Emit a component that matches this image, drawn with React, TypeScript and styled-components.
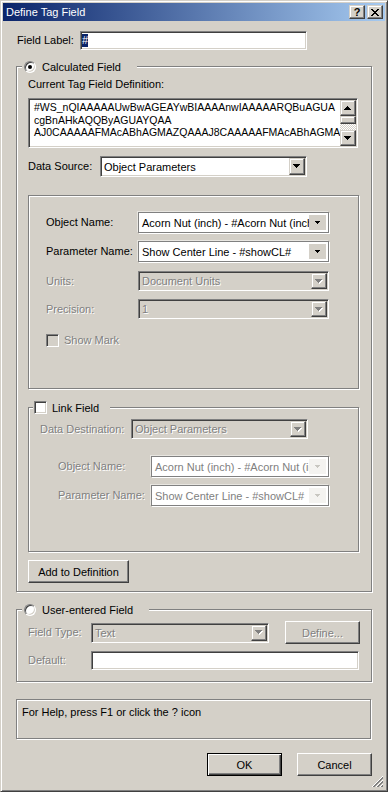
import styled, { createGlobalStyle, css } from "styled-components";

const FACE = "#d4d0c8";
const SHADOW = "#808080";
const DARK = "#404040";

const GlobalStyle = createGlobalStyle`
  html, body {
    margin: 0;
    padding: 0;
    background: ${FACE};
  }
  body {
    font-family: "Liberation Sans", Arial, sans-serif;
    font-size: 11px;
    color: #000;
  }
  * {
    box-sizing: border-box;
  }
`;

// win2k bevels
const raised = css`
  border: 1px solid;
  border-color: #fff ${DARK} ${DARK} #fff;
  box-shadow: inset -1px -1px 0 ${SHADOW}, inset 1px 1px 0 ${FACE};
`;

const raisedSmall = css`
  border: 1px solid;
  border-color: ${FACE} ${DARK} ${DARK} ${FACE};
  box-shadow: inset -1px -1px 0 ${SHADOW}, inset 1px 1px 0 #fff;
`;

const sunken = css`
  border: 1px solid;
  border-color: ${SHADOW} #fff #fff ${SHADOW};
  box-shadow: inset 1px 1px 0 ${DARK}, inset -1px -1px 0 ${FACE};
`;

const etched = css`
  border: 1px solid ${SHADOW};
  box-shadow: inset 1px 1px 0 #fff, 1px 1px 0 #fff;
`;

const greyed = css`
  color: ${SHADOW};
  text-shadow: 1px 1px 0 #fff;
`;

const Window = styled.div`
  position: relative;
  width: 388px;
  height: 792px;
  padding: 2px;
  background: ${FACE};
  border: 1px solid;
  border-color: ${FACE} ${DARK} ${DARK} ${FACE};
  box-shadow: inset 1px 1px 0 #fff, inset -1px -1px 0 ${SHADOW};
  display: flex;
  flex-direction: column;
  overflow: hidden;
`;

const TitleBar = styled.div`
  height: 18px;
  flex-shrink: 0;
  display: flex;
  align-items: center;
  padding: 0 2px 0 3px;
  background: linear-gradient(to right, #0a246a, #a6caf0);
  color: #fff;
`;

const CaptionButtons = styled.div`
  margin-left: auto;
  display: flex;
  gap: 2px;
`;

const CaptionButton = styled.div`
  ${raisedSmall}
  width: 16px;
  height: 14px;
  background: ${FACE};
  color: #000;
  font-weight: bold;
  font-size: 11px;
  display: flex;
  align-items: center;
  justify-content: center;
`;

const Body = styled.div`
  display: flex;
  flex-direction: column;
  align-items: flex-start;
  padding: 0 13px;
`;

const Row = styled.div<{ $mt?: number; $ml?: number; $h?: number }>`
  display: flex;
  align-items: center;
  flex-shrink: 0;
  margin-top: ${(p) => p.$mt ?? 0}px;
  margin-left: ${(p) => p.$ml ?? 0}px;
  height: ${(p) => p.$h ?? 21}px;
`;

const Label = styled.span<{ $w?: number; $disabled?: boolean; $ml?: number }>`
  width: ${(p) => (p.$w ? `${p.$w}px` : "auto")};
  margin-left: ${(p) => p.$ml ?? 0}px;
  flex-shrink: 0;
  white-space: nowrap;
  line-height: 13px;
  ${(p) => p.$disabled && greyed}
`;

const Caption = styled.div<{ $mt: number }>`
  margin-top: ${(p) => p.$mt}px;
  line-height: 13px;
`;

const TextField = styled.div<{ $w: number; $h: number }>`
  ${sunken}
  width: ${(p) => p.$w}px;
  height: ${(p) => p.$h}px;
  flex-shrink: 0;
  background: #fff;
  padding: 0 1px;
  display: flex;
  align-items: center;
`;

const Selected = styled.span`
  background: #0a246a;
  color: #fff;
  line-height: 13px;
`;

const GroupBox = styled.div<{ $w: number; $h?: number; $mt: number; $pad: string }>`
  ${etched}
  width: ${(p) => p.$w}px;
  height: ${(p) => (p.$h ? `${p.$h}px` : "auto")};
  margin-top: ${(p) => p.$mt}px;
  padding: ${(p) => p.$pad};
  flex-shrink: 0;
  display: flex;
  flex-direction: column;
  align-items: flex-start;
`;

const GroupTitle = styled.div<{ $ml: number; $pl: number; $pr: number; $gap: number }>`
  display: flex;
  align-items: center;
  height: 13px;
  margin: -7px 0 0 ${(p) => p.$ml}px;
  padding: 0 ${(p) => p.$pr}px 0 ${(p) => p.$pl}px;
  gap: ${(p) => p.$gap}px;
  background: ${FACE};
`;

const Radio = styled.span<{ $checked?: boolean }>`
  width: 12px;
  height: 12px;
  border-radius: 50%;
  border: 1px solid;
  border-color: ${SHADOW} #fff #fff ${SHADOW};
  box-shadow: inset 1px 1px 0 ${DARK}, inset -1px -1px 0 ${FACE};
  background: #fff;
  display: flex;
  align-items: center;
  justify-content: center;
  &::after {
    content: "";
    display: ${(p) => (p.$checked ? "block" : "none")};
    width: 4px;
    height: 4px;
    border-radius: 50%;
    background: #000;
  }
`;

const Checkbox = styled.span<{ $disabled?: boolean }>`
  ${sunken}
  width: 13px;
  height: 13px;
  flex-shrink: 0;
  background: ${(p) => (p.$disabled ? FACE : "#fff")};
`;

const DefinitionBox = styled.div`
  ${sunken}
  width: 330px;
  height: 50px;
  margin-top: 7px;
  padding: 1px;
  background: #fff;
  display: flex;
`;

const DefinitionText = styled.div`
  flex: 1;
  padding: 1px 0 0 4px;
  font-size: 10.5px;
  line-height: 12.5px;
  white-space: pre;
  overflow: hidden;
`;

const ScrollBar = styled.div`
  width: 16px;
  display: flex;
  flex-direction: column;
`;

const ScrollButton = styled.div`
  ${raisedSmall}
  height: 16px;
  background: ${FACE};
  display: flex;
  align-items: center;
  justify-content: center;
`;

const ScrollThumb = styled.div`
  ${raisedSmall}
  height: 8px;
  background: ${FACE};
`;

const ScrollTrack = styled.div`
  flex: 1;
  background: repeating-conic-gradient(${FACE} 0 25%, #fff 0 50%) 0 0 / 2px 2px;
`;

const ComboBox = styled.div<{ $w: number; $h: number; $flat?: boolean; $disabled?: boolean }>`
  width: ${(p) => p.$w}px;
  height: ${(p) => p.$h}px;
  flex-shrink: 0;
  display: flex;
  ${(p) =>
    p.$flat
      ? css`
          border: 1px solid ${SHADOW};
          box-shadow: 1px 1px 0 #fff, -1px -1px 0 #e8e6e1;
          padding: 2px;
          background: #fff;
        `
      : css`
          ${sunken}
          padding: 1px;
          background: ${p.$disabled ? FACE : "#fff"};
        `}
`;

const ComboText = styled.span<{ $pl: number; $dim?: boolean; $emboss?: boolean }>`
  flex: 1;
  min-width: 0;
  overflow: hidden;
  white-space: nowrap;
  padding-left: ${(p) => p.$pl}px;
  display: flex;
  align-items: center;
  color: ${(p) => (p.$dim ? SHADOW : "#000")};
  ${(p) => p.$emboss && "text-shadow: 1px 1px 0 #fff;"}
`;

const DropButton = styled.span<{ $flat?: boolean; $disabled?: boolean }>`
  width: ${(p) => (p.$flat ? 17 : 16)}px;
  flex-shrink: 0;
  display: flex;
  align-items: center;
  justify-content: center;
  ${(p) =>
    p.$flat
      ? css`
          background: ${p.$disabled ? "#f4f3f0" : FACE};
        `
      : css`
          ${raisedSmall}
          background: ${FACE};
        `}
`;

const PushButton = styled.div<{ $w: number; $h: number; $mt?: number; $ml?: number; $isDefault?: boolean; $disabled?: boolean }>`
  ${raised}
  width: ${(p) => p.$w}px;
  height: ${(p) => p.$h}px;
  margin-top: ${(p) => p.$mt ?? 0}px;
  margin-left: ${(p) => p.$ml ?? 0}px;
  flex-shrink: 0;
  background: ${FACE};
  display: flex;
  align-items: center;
  justify-content: center;
  white-space: nowrap;
  ${(p) => p.$disabled && greyed}
  ${(p) =>
    p.$isDefault &&
    css`
      border-color: #000;
      box-shadow: inset 1px 1px 0 #fff, inset -1px -1px 0 ${DARK}, inset -2px -2px 0 ${SHADOW};
    `}
`;

const HelpBox = styled.div`
  ${etched}
  width: 355px;
  height: 40px;
  margin-top: 17px;
  padding: 6px 5px 0;
  line-height: 13px;
`;

const ButtonRow = styled.div`
  align-self: stretch;
  display: flex;
  justify-content: flex-end;
  gap: 15px;
  margin-top: 14px;
`;

const Grip = styled.svg`
  position: absolute;
  right: 3px;
  bottom: 3px;
`;

type Tone = "black" | "grey" | "faint";

function Arrow({ dir = "down", tone = "black", small = false }: { dir?: "up" | "down"; tone?: Tone; small?: boolean }) {
  const w = small ? 5 : 7;
  const h = small ? 3 : 4;
  const rows = Array.from({ length: h }, (_, i) => ({ x: i, w: w - i * 2, y: dir === "down" ? i : h - 1 - i }));
  const fill = tone === "black" ? "#000" : tone === "grey" ? SHADOW : "#c8c6c0";
  return (
    <svg width={w + 1} height={h + 1} shapeRendering="crispEdges">
      {tone === "grey" && rows.map((r) => <rect key={`s${r.y}`} x={r.x + 1} y={r.y + 1} width={r.w} height={1} fill="#fff" />)}
      {rows.map((r) => (
        <rect key={r.y} x={r.x} y={r.y} width={r.w} height={1} fill={fill} />
      ))}
    </svg>
  );
}

function CloseGlyph() {
  const cells = Array.from({ length: 7 }, (_, i) => i);
  return (
    <svg width="8" height="7" shapeRendering="crispEdges">
      {cells.map((i) => (
        <rect key={`a${i}`} x={i} y={i} width={2} height={1} fill="#000" />
      ))}
      {cells.map((i) => (
        <rect key={`b${i}`} x={6 - i} y={i} width={2} height={1} fill="#000" />
      ))}
    </svg>
  );
}

interface ComboProps {
  value: string;
  w: number;
  h: number;
  flat?: boolean;
  disabled?: boolean;
}

function Combo({ value, w, h, flat, disabled }: ComboProps) {
  const tone: Tone = !disabled ? "black" : flat ? "faint" : "grey";
  return (
    <ComboBox $w={w} $h={h} $flat={flat} $disabled={disabled}>
      <ComboText $pl={flat ? 1 : 2} $dim={disabled} $emboss={disabled && !flat}>
        {value}
      </ComboText>
      <DropButton $flat={flat} $disabled={disabled}>
        <Arrow tone={tone} small={flat} />
      </DropButton>
    </ComboBox>
  );
}

const definitionLines = [
  "#WS_nQIAAAAAUwBwAGEAYwBIAAAAnwIAAAAARQBuAGUA",
  "cgBnAHkAQQByAGUAYQAA",
  "AJ0CAAAAAFMAcABhAGMAZQAAAJ8CAAAAAFMAcABhAGMA",
];

export default function App() {
  return (
    <>
      <GlobalStyle />
      <Window>
        <TitleBar>
          <span>Define Tag Field</span>
          <CaptionButtons>
            <CaptionButton>?</CaptionButton>
            <CaptionButton>
              <CloseGlyph />
            </CaptionButton>
          </CaptionButtons>
        </TitleBar>

        <Body>
          <Row $mt={10} $ml={1} $h={19}>
            <Label $w={63}>Field Label:</Label>
            <TextField $w={227} $h={19}>
              <Selected>#</Selected>
            </TextField>
          </Row>

          <GroupBox $w={356} $mt={16} $pad="0 11px 8px 11px">
            <GroupTitle $ml={-6} $pl={2} $pr={16} $gap={6}>
              <Radio $checked />
              <span>Calculated Field</span>
            </GroupTitle>
            <Caption $mt={5}>Current Tag Field Definition:</Caption>
            <DefinitionBox>
              <DefinitionText>
                {definitionLines.map((line) => (
                  <div key={line}>{line}</div>
                ))}
              </DefinitionText>
              <ScrollBar>
                <ScrollButton>
                  <Arrow dir="up" />
                </ScrollButton>
                <ScrollThumb />
                <ScrollTrack />
                <ScrollButton>
                  <Arrow />
                </ScrollButton>
              </ScrollBar>
            </DefinitionBox>
            <Row $mt={8}>
              <Label $w={72}>Data Source:</Label>
              <Combo value="Object Parameters" w={207} h={21} />
            </Row>

            <GroupBox $w={331} $h={194} $mt={18} $pad="16px 0 0 17px">
              <Row>
                <Label $w={92}>Object Name:</Label>
                <Combo flat value="Acorn Nut (inch) - #Acorn Nut (inch)#" w={191} h={21} />
              </Row>
              <Row $mt={8}>
                <Label $w={92}>Parameter Name:</Label>
                <Combo flat value="Show Center Line - #showCL#" w={191} h={21} />
              </Row>
              <Row $mt={9} $h={20}>
                <Label $w={92} $disabled>
                  Units:
                </Label>
                <Combo disabled value="Document Units" w={191} h={20} />
              </Row>
              <Row $mt={8} $h={20}>
                <Label $w={92} $disabled>
                  Precision:
                </Label>
                <Combo disabled value="1" w={191} h={20} />
              </Row>
              <Row $mt={15} $h={13}>
                <Checkbox $disabled />
                <Label $ml={5} $disabled>
                  Show Mark
                </Label>
              </Row>
            </GroupBox>

            <GroupBox $w={331} $h={145} $mt={18} $pad="0 0 0 11px">
              <GroupTitle $ml={-7} $pl={1} $pr={11} $gap={5}>
                <Checkbox />
                <span>Link Field</span>
              </GroupTitle>
              <Row $mt={5} $h={20}>
                <Label $w={91} $disabled>
                  Data Destination:
                </Label>
                <Combo disabled value="Object Parameters" w={177} h={20} />
              </Row>
              <Row $mt={17} $ml={18}>
                <Label $w={93} $disabled>
                  Object Name:
                </Label>
                <Combo flat disabled value="Acorn Nut (inch) - #Acorn Nut (inch)#" w={178} h={21} />
              </Row>
              <Row $mt={8} $ml={18}>
                <Label $w={93} $disabled>
                  Parameter Name:
                </Label>
                <Combo flat disabled value="Show Center Line - #showCL#" w={178} h={21} />
              </Row>
            </GroupBox>

            <PushButton $w={101} $h={23} $mt={8}>
              Add to Definition
            </PushButton>
          </GroupBox>

          <GroupBox $w={356} $mt={17} $pad="0 11px 11px 11px">
            <GroupTitle $ml={-6} $pl={2} $pr={16} $gap={6}>
              <Radio />
              <span>User-entered Field</span>
            </GroupTitle>
            <Row $mt={5} $h={23}>
              <Label $w={63} $disabled>
                Field Type:
              </Label>
              <Combo disabled value="Text" w={178} h={20} />
              <PushButton $w={75} $h={23} $ml={16} $disabled>
                Define...
              </PushButton>
            </Row>
            <Row $mt={7} $h={19}>
              <Label $w={63} $disabled>
                Default:
              </Label>
              <TextField $w={268} $h={19} />
            </Row>
          </GroupBox>

          <HelpBox>For Help, press F1 or click the ? icon</HelpBox>

          <ButtonRow>
            <PushButton $w={75} $h={23} $isDefault>
              OK
            </PushButton>
            <PushButton $w={75} $h={23}>
              Cancel
            </PushButton>
          </ButtonRow>
        </Body>

        <Grip width="12" height="12" shapeRendering="crispEdges">
          <path d="M11 0L0 11M11 4L4 11M11 8L8 11" stroke="#fff" />
          <path d="M11 1L1 11M11 2L2 11M11 5L5 11M11 6L6 11M11 9L9 11M11 10L10 11" stroke={SHADOW} />
        </Grip>
      </Window>
    </>
  );
}
